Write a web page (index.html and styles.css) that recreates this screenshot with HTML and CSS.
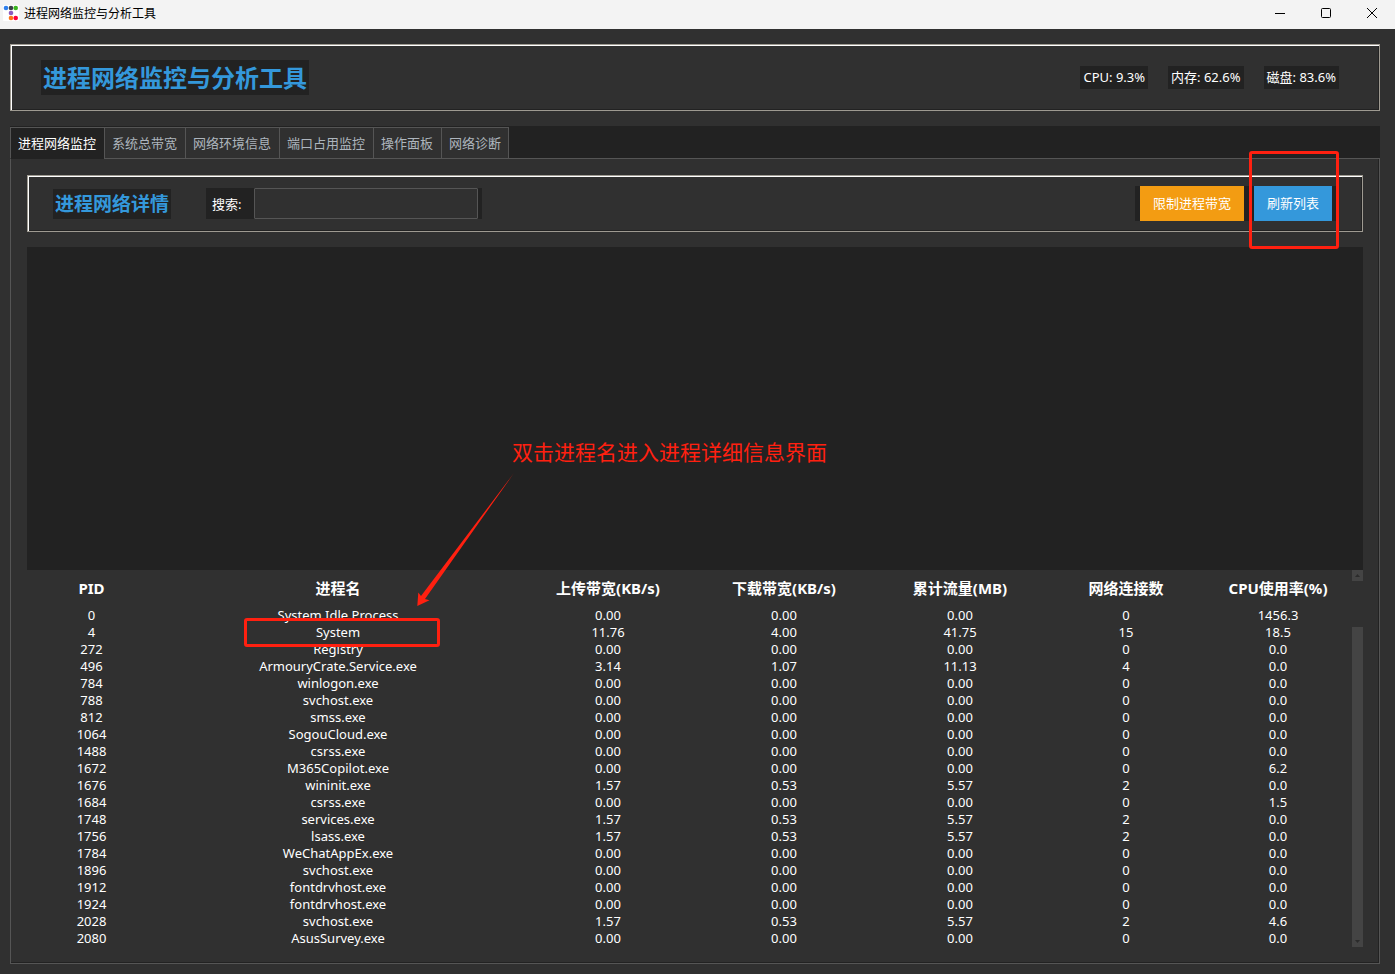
FILE: index.html
```
<!DOCTYPE html>
<html lang="zh-CN">
<head>
    <meta charset="UTF-8">
    <meta name="viewport" content="width=device-width, initial-scale=1.0">
    <title>进程网络监控与分析工具</title>
    <link rel="stylesheet" href="styles.css">
</head>
<body>
    <div class="window">
        <div class="titlebar">
            <svg class="app-icon" width="16" height="16" viewBox="0 0 16 16">
                <rect width="16" height="16" rx="1" fill="#fff"/>
                <circle cx="3" cy="3" r="2.3" fill="#2f80ed"/>
                <circle cx="8" cy="3" r="2.3" fill="#3a4048"/>
                <circle cx="12.7" cy="3" r="2.3" fill="#3cb521"/>
                <circle cx="8" cy="8" r="2.3" fill="#8e5bc0"/>
                <circle cx="8" cy="13" r="2.3" fill="#ff7518"/>
                <circle cx="12.7" cy="13" r="2.3" fill="#ff0039"/>
            </svg>
            <span class="titlebar-text">进程网络监控与分析工具</span>
            <button type="button" class="win-btn" aria-label="最小化">
                <svg width="12" height="12" viewBox="0 0 12 12"><path d="M1 6.5h10" stroke="#000"/></svg>
            </button>
            <button type="button" class="win-btn" aria-label="最大化">
                <svg width="12" height="12" viewBox="0 0 12 12"><rect x="1.5" y="1.5" width="9" height="9" rx="1" fill="none" stroke="#000"/></svg>
            </button>
            <button type="button" class="win-btn" aria-label="关闭">
                <svg width="12" height="12" viewBox="0 0 12 12"><path d="M1 1l10 10M11 1L1 11" stroke="#000"/></svg>
            </button>
        </div>

        <div class="main">
            <header class="header frame">
                <h1>进程网络监控与分析工具</h1>
                <div class="stats">
                    <span class="stat">CPU: 9.3%</span>
                    <span class="stat">内存: 62.6%</span>
                    <span class="stat">磁盘: 83.6%</span>
                </div>
            </header>

            <nav class="tabs">
                <button type="button" class="tab active">进程网络监控</button>
                <button type="button" class="tab">系统总带宽</button>
                <button type="button" class="tab">网络环境信息</button>
                <button type="button" class="tab">端口占用监控</button>
                <button type="button" class="tab">操作面板</button>
                <button type="button" class="tab">网络诊断</button>
            </nav>

            <section class="pane">
                <div class="toolbar frame">
                    <h2>进程网络详情</h2>
                    <div class="search">
                        <label for="search">搜索:</label>
                        <input type="text" id="search">
                    </div>
                    <div class="actions">
                        <button type="button" class="btn btn-warning">限制进程带宽</button>
                        <div class="marked">
                            <button type="button" class="btn btn-primary">刷新列表</button>
                            <div class="mark mark-refresh"></div>
                        </div>
                    </div>
                </div>

                <div class="chart"></div>

                <div class="list">
                    <table>
                        <colgroup>
                            <col class="col-pid">
                            <col class="col-name">
                            <col class="col-rate">
                            <col class="col-rate">
                            <col class="col-rate">
                            <col class="col-conn">
                            <col class="col-cpu">
                        </colgroup>
                        <thead>
                            <tr><th>PID</th><th>进程名</th><th>上传带宽(KB/s)</th><th>下载带宽(KB/s)</th><th>累计流量(MB)</th><th>网络连接数</th><th>CPU使用率(%)</th></tr>
                        </thead>
                        <tbody>
                            <tr><td>0</td><td>System Idle Process</td><td>0.00</td><td>0.00</td><td>0.00</td><td>0</td><td>1456.3</td></tr>
                            <tr><td>4</td><td>System</td><td>11.76</td><td>4.00</td><td>41.75</td><td>15</td><td>18.5</td></tr>
                            <tr><td>272</td><td>Registry</td><td>0.00</td><td>0.00</td><td>0.00</td><td>0</td><td>0.0</td></tr>
                            <tr><td>496</td><td>ArmouryCrate.Service.exe</td><td>3.14</td><td>1.07</td><td>11.13</td><td>4</td><td>0.0</td></tr>
                            <tr><td>784</td><td>winlogon.exe</td><td>0.00</td><td>0.00</td><td>0.00</td><td>0</td><td>0.0</td></tr>
                            <tr><td>788</td><td>svchost.exe</td><td>0.00</td><td>0.00</td><td>0.00</td><td>0</td><td>0.0</td></tr>
                            <tr><td>812</td><td>smss.exe</td><td>0.00</td><td>0.00</td><td>0.00</td><td>0</td><td>0.0</td></tr>
                            <tr><td>1064</td><td>SogouCloud.exe</td><td>0.00</td><td>0.00</td><td>0.00</td><td>0</td><td>0.0</td></tr>
                            <tr><td>1488</td><td>csrss.exe</td><td>0.00</td><td>0.00</td><td>0.00</td><td>0</td><td>0.0</td></tr>
                            <tr><td>1672</td><td>M365Copilot.exe</td><td>0.00</td><td>0.00</td><td>0.00</td><td>0</td><td>6.2</td></tr>
                            <tr><td>1676</td><td>wininit.exe</td><td>1.57</td><td>0.53</td><td>5.57</td><td>2</td><td>0.0</td></tr>
                            <tr><td>1684</td><td>csrss.exe</td><td>0.00</td><td>0.00</td><td>0.00</td><td>0</td><td>1.5</td></tr>
                            <tr><td>1748</td><td>services.exe</td><td>1.57</td><td>0.53</td><td>5.57</td><td>2</td><td>0.0</td></tr>
                            <tr><td>1756</td><td>lsass.exe</td><td>1.57</td><td>0.53</td><td>5.57</td><td>2</td><td>0.0</td></tr>
                            <tr><td>1784</td><td>WeChatAppEx.exe</td><td>0.00</td><td>0.00</td><td>0.00</td><td>0</td><td>0.0</td></tr>
                            <tr><td>1896</td><td>svchost.exe</td><td>0.00</td><td>0.00</td><td>0.00</td><td>0</td><td>0.0</td></tr>
                            <tr><td>1912</td><td>fontdrvhost.exe</td><td>0.00</td><td>0.00</td><td>0.00</td><td>0</td><td>0.0</td></tr>
                            <tr><td>1924</td><td>fontdrvhost.exe</td><td>0.00</td><td>0.00</td><td>0.00</td><td>0</td><td>0.0</td></tr>
                            <tr><td>2028</td><td>svchost.exe</td><td>1.57</td><td>0.53</td><td>5.57</td><td>2</td><td>4.6</td></tr>
                            <tr><td>2080</td><td>AsusSurvey.exe</td><td>0.00</td><td>0.00</td><td>0.00</td><td>0</td><td>0.0</td></tr>
                        </tbody>
                    </table>
                    <div class="scrollbar" aria-hidden="true">
                        <div class="scroll-up">
                            <svg width="5" height="3" viewBox="0 0 5 3"><path d="M0 3L2.5 0L5 3z" fill="#2b2b2b"/></svg>
                        </div>
                        <div class="scroll-thumb">
                            <svg width="5" height="3" viewBox="0 0 5 3"><path d="M0 0h5L2.5 3z" fill="#2b2b2b"/></svg>
                        </div>
                    </div>

                    <div class="mark mark-system"></div>
                    <svg class="arrow" width="100" height="136" viewBox="0 0 100 136">
                        <path d="M98 3L5 126L2.3 122.5L1.3 136L13.5 130.3L9 129z" fill="#ff2010"/>
                    </svg>
                    <p class="tip">双击进程名进入进程详细信息界面</p>
                </div>
            </section>
        </div>
    </div>
</body>
</html>
```

FILE: styles.css
```
/* Global */
* {
    box-sizing: border-box;
    margin: 0;
    padding: 0;
}

body {
    background-color: #303030;
    color: #fff;
    font-family: "Noto Sans", "Noto Sans CJK SC", sans-serif;
    font-size: 13px;
}

button,
input {
    font: inherit;
    color: inherit;
    border: none;
}

svg {
    display: block;
}

.window {
    display: flex;
    flex-direction: column;
    min-height: 100vh;
}

/* Title bar */
.titlebar {
    display: flex;
    align-items: center;
    height: 29px;
    padding: 0 0 3px 3px;
    background-color: #f3f3f3;
    color: #000;
    font-size: 12px;
}

.titlebar-text {
    flex: 1;
    margin-left: 5px;
}

.win-btn {
    display: flex;
    align-items: center;
    justify-content: center;
    width: 46px;
    height: 26px;
    background: none;
}

/* Main */
.main {
    flex: 1;
    display: flex;
    flex-direction: column;
    padding: 15px 15px 10px 10px;
}

.frame {
    display: flex;
    align-items: center;
    border: 1px solid #9e9a91;
    box-shadow: inset 1px 1px #fff, inset -1px -1px #222;
}

.header {
    height: 67px;
    padding: 0 40px 0 30px;
    margin-bottom: 15px;
}

h1,
h2 {
    padding: 0 2px;
    background-color: #222;
    color: #3498db;
    font-weight: bold;
}

h1 {
    font-size: 24px;
    line-height: 35px;
}

h2 {
    font-size: 19px;
    line-height: 30px;
}

.stats {
    display: flex;
    gap: 20px;
    margin-left: auto;
}

.stat {
    padding: 0 3px;
    line-height: 23px;
    background-color: #222;
}

/* Tabs */
.tabs {
    display: flex;
    height: 33px;
    padding-top: 1px;
    background-color: #222;
    box-shadow: inset 0 -1px #555;
}

.tab {
    padding: 0 8px 2px 7px;
    border: 1px solid #555;
    border-right: none;
    background-color: #303030;
    color: #adb5bd;
}

.tab:last-child {
    padding-right: 7px;
    border-right: 1px solid #555;
}

.tab.active {
    border-bottom-color: #222;
    background-color: #222;
    color: #fff;
}

.pane {
    flex: 1;
    display: flex;
    flex-direction: column;
    padding: 16px;
    border: 1px solid #555;
    border-top: none;
    box-shadow: inset -1px -1px #222;
}

/* Toolbar */
.toolbar {
    height: 57px;
    padding: 0 26px 0 25px;
    margin-bottom: 15px;
}

.search {
    display: flex;
    align-items: center;
    margin-left: 35px;
    padding: 0 4px 0 6px;
    background-color: #222;
}

.search label {
    width: 42px;
}

.search input {
    width: 224px;
    height: 31px;
    padding: 0 5px;
    border: 1px solid #555;
    border-radius: 1px;
    background-color: #303030;
}

.actions {
    display: flex;
    gap: 10px;
    margin-left: auto;
    padding: 0 4px 0 5px;
    background-color: #222;
}

.btn {
    height: 35px;
    padding: 0 13px 2px;
}

.btn-warning {
    background-color: #f39c12;
}

.btn-primary {
    background-color: #3498db;
}

.chart {
    flex: 1;
    min-height: 200px;
    background-color: #222;
}

/* Process list */
.list {
    position: relative;
    display: flex;
}

table {
    flex: 1;
    table-layout: fixed;
    border-collapse: collapse;
    text-align: center;
}

.col-pid { width: 129px; }
.col-name { width: 364px; }
.col-rate { width: 176px; }
.col-conn { width: 156px; }
.col-cpu { width: 148px; }

th {
    height: 37px;
    padding-bottom: 2px;
    font-size: 15px;
    line-height: 20px;
}

td {
    height: 17px;
    line-height: 17px;
    white-space: nowrap;
}

.scrollbar {
    display: flex;
    flex-direction: column;
    width: 11px;
}

.scroll-up {
    height: 11px;
    margin-bottom: 46px;
    padding: 4px 3px;
    background-color: #444;
}

.scroll-thumb {
    flex: 1;
    display: flex;
    align-items: flex-end;
    padding: 4px 3px;
    background-color: #444;
}

/* Red annotations */
.marked {
    position: relative;
}

.mark {
    position: absolute;
    border: 3px solid #ff2010;
    border-radius: 3px;
}

.mark-refresh {
    top: -35px;
    left: -5px;
    width: 90px;
    height: 98px;
}

.mark-system {
    top: 48px;
    left: 217px;
    width: 196px;
    height: 29px;
}

.arrow {
    position: absolute;
    top: -100px;
    left: 389px;
}

.tip {
    position: absolute;
    top: -133px;
    left: 485px;
    color: #ff2010;
    font-size: 21px;
    line-height: 30px;
}
```
